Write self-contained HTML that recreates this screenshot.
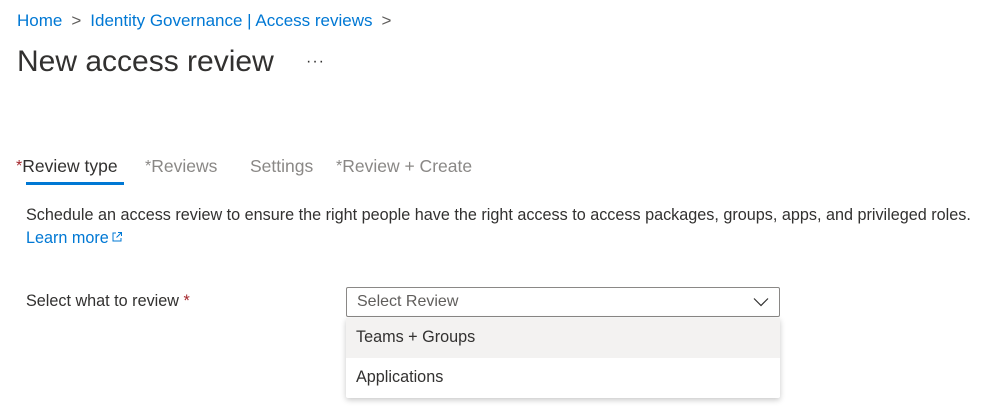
<!DOCTYPE html>
<html><head><meta charset="utf-8"><style>
*{margin:0;padding:0;box-sizing:border-box}
body{width:992px;height:418px;background:#fff;font-family:"Liberation Sans",sans-serif;color:#323130;position:relative;overflow:hidden}
.a{position:absolute;white-space:nowrap}
.bc{top:11px;left:17px;font-size:17px;color:#0078d4}
.bc .s{color:#605e5c;margin:0 9px}
.title{top:45px;left:17px;font-size:30px;color:#323130}
.dots{top:53px;left:306px;font-size:16px;color:#323130;letter-spacing:1px}
.tab{top:156px;font-size:17.5px;color:#8a8886}
.st{font-size:16px;position:relative;top:-1px}
.r{color:#a4262c}
.ul{top:182px;left:26px;width:98px;height:3px;background:#0078d4}
.desc{top:206px;left:26px;font-size:16.2px;color:#323130}
.lm{top:229px;left:26px;font-size:16.2px;color:#0078d4}
.lab{top:292px;left:26px;font-size:16.2px}
.sel{top:287px;left:346px;width:434px;height:30px;border:1px solid #8a8886;border-radius:2px}
.sel span{position:absolute;left:10px;top:5px;font-size:16px;color:#605e5c}
.dd{top:318px;left:346px;width:434px;height:80px;background:#fff;box-shadow:0 2px 6px rgba(0,0,0,.22);border-radius:2px}
.it{position:absolute;left:0;width:434px;height:40px;font-size:16.2px;padding:10px 10px;color:#323130}
</style></head><body>
<div class="a bc">Home<span class="s">&gt;</span>Identity Governance | Access reviews<span class="s">&gt;</span></div>
<div class="a title">New access review</div>
<div class="a dots">···</div>
<div class="a tab" style="left:16px;color:#323130"><span class="r st">*</span>Review type</div>
<div class="a tab" style="left:145px"><span class="st">*</span>Reviews</div>
<div class="a tab" style="left:250px">Settings</div>
<div class="a tab" style="left:336px"><span class="st">*</span>Review + Create</div>
<div class="a ul"></div>
<div class="a desc">Schedule an access review to ensure the right people have the right access to access packages, groups, apps, and privileged roles.</div>
<div class="a lm">Learn more<svg width="12" height="12" viewBox="0 0 12 12" style="margin-left:2px"><path d="M5 2H2v8h8V7M7 1.5h3.5V5M10.5 1.5L5.5 6.5" fill="none" stroke="#0078d4" stroke-width="1"/></svg></div>
<div class="a lab">Select what to review <span class="r">*</span></div>
<div class="a sel"><span>Select Review</span><svg width="16" height="10" viewBox="0 0 16 10" style="position:absolute;right:10px;top:9px"><path d="M1 1.5l7 7 7-7" fill="none" stroke="#323130" stroke-width="1.2"/></svg></div>
<div class="a dd"><div class="it" style="top:0;background:#f3f2f1">Teams + Groups</div><div class="it" style="top:40px">Applications</div></div>
</body></html>
